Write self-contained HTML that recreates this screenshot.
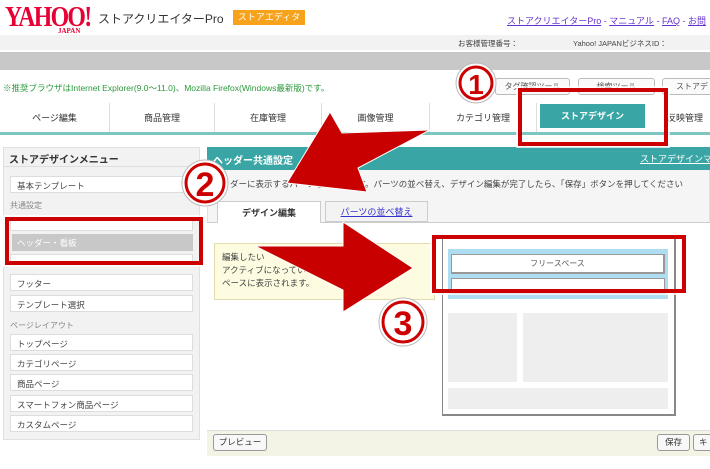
<!DOCTYPE html>
<html><head><meta charset="utf-8"><style>
*{margin:0;padding:0;box-sizing:border-box}
body{width:710px;height:469px;overflow:hidden;background:#fff;font-family:"Liberation Sans","Noto Sans CJK JP",sans-serif;font-size:9px;color:#333;position:relative}
.a{position:absolute}
.item{position:absolute;left:10px;width:183px;height:17px;background:#fff;border:1px solid #ddd;padding:3px 6px;font-size:8.5px;color:#444}
.lbl{position:absolute;left:10px;font-size:8px;color:#888}
.tab{position:absolute;top:103px;height:30px;border-right:1px solid #ddd;text-align:center;line-height:30px;font-size:9px}
.btn{position:absolute;top:78px;height:17px;border:1px solid #bbb;border-radius:3px;background:#fafafa;font-size:8px;text-align:center;line-height:15px;color:#555}
</style></head><body>
<div class="a" style="left:5px;top:2px;font:bold 28px 'Liberation Serif',serif;color:#e60033;letter-spacing:-2px;transform:scaleX(0.85);transform-origin:left">YAHOO!</div>
<div class="a" style="left:58px;top:27px;font:bold 7px 'Liberation Serif',serif;color:#e60033">JAPAN</div>
<div class="a" style="left:98px;top:10px;font-size:12px;color:#333;white-space:nowrap">ストアクリエイターPro</div>
<div class="a" style="left:233px;top:10px;width:72px;height:15px;background:#f7a21b;color:#fff;font-size:9px;text-align:center;line-height:15px">ストアエディタ</div>
<div class="a" style="left:507px;top:14px;font-size:9px;color:#63c;white-space:nowrap"><u>ストアクリエイターPro</u> - <u>マニュアル</u> - <u>FAQ</u> - <u>お問</u></div>
<div class="a" style="left:0;top:35px;width:710px;height:15px;background:#f2f2f2"></div>
<div class="a" style="left:458px;top:38px;font-size:7.5px;color:#444">お客様管理番号：</div>
<div class="a" style="left:573px;top:38px;font-size:7.5px;color:#444">Yahoo! JAPANビジネスID：</div>
<div class="a" style="left:0;top:52px;width:710px;height:18px;background:#c8c8c8"></div>
<div class="a" style="left:3px;top:82px;font-size:8.5px;color:#2a9a3a">※推奨ブラウザはInternet Explorer(9.0〜11.0)、Mozilla Firefox(Windows最新版)です。</div>
<div class="btn" style="left:495px;width:75px">タグ確認ツール</div>
<div class="btn" style="left:578px;width:77px">検索ツール</div>
<div class="btn" style="left:662px;width:60px">ストアデ</div>
<div class="tab" style="left:0;width:110px">ページ編集</div>
<div class="tab" style="left:110px;width:105px">商品管理</div>
<div class="tab" style="left:215px;width:107px">在庫管理</div>
<div class="tab" style="left:322px;width:108px">画像管理</div>
<div class="tab" style="left:430px;width:107px">カテゴリ管理</div>
<div class="a" style="left:540px;top:104px;width:105px;height:24px;background:#3aa5a5;color:#fff;font-weight:bold;text-align:center;line-height:24px">ストアデザイン</div>
<div class="tab" style="left:645px;width:80px;border:0">反映管理</div>
<div class="a" style="left:0;top:132px;width:710px;height:3px;background:#7fc6c2"></div>
<!-- left -->
<div class="a" style="left:3px;top:147px;width:197px;height:293px;background:#f2f2f2;border:1px solid #e0e0e0"></div>
<div class="a" style="left:3px;top:147px;width:197px;height:20px;border-bottom:1px solid #ddd;font-weight:bold;font-size:10px;padding:4px 6px">ストアデザインメニュー</div>
<div class="item" style="top:176px">基本テンプレート</div>
<div class="lbl" style="top:200px">共通設定</div>
<div class="item" style="top:219px;height:12px"></div>
<div class="a" style="left:12px;top:234px;width:181px;height:17px;background:#c8c8c8;color:#fff;padding:3px 5px;font-size:8.5px">ヘッダー・看板</div>
<div class="item" style="top:254px;height:10px"></div>
<div class="item" style="top:274px">フッター</div>
<div class="item" style="top:295px">テンプレート選択</div>
<div class="lbl" style="top:320px">ページレイアウト</div>
<div class="item" style="top:334px">トップページ</div>
<div class="item" style="top:354px">カテゴリページ</div>
<div class="item" style="top:374px">商品ページ</div>
<div class="item" style="top:395px">スマートフォン商品ページ</div>
<div class="item" style="top:415px">カスタムページ</div>
<!-- right -->
<div class="a" style="left:207px;top:147px;width:503px;height:309px;background:#f5f5f5;border:1px solid #e0e0e0"></div>
<div class="a" style="left:207px;top:147px;width:503px;height:23px;background:#3aa5a5;color:#fff;font-weight:bold;font-size:10px;padding:5px 6px">ヘッダー共通設定</div>
<div class="a" style="left:640px;top:152px;color:#fff;font-size:9px;text-decoration:underline;white-space:nowrap">ストアデザインマ</div>
<div class="a" style="left:213px;top:178px;font-size:8.5px;color:#444;white-space:nowrap">ヘッダーに表示するパーツを設定します。パーツの並べ替え、デザイン編集が完了したら、「保存」ボタンを押してください</div>
<div class="a" style="left:207px;top:222px;width:503px;height:208px;background:#fff;border-top:1px solid #ccc"></div>
<div class="a" style="left:217px;top:201px;width:104px;height:22px;background:#fff;border:1px solid #ccc;border-bottom:0;text-align:center;line-height:22px;font-weight:bold">デザイン編集</div>
<div class="a" style="left:325px;top:201px;width:103px;height:21px;background:#f3f3f3;border:1px solid #ccc;text-align:center;line-height:21px;color:#33c;text-decoration:underline">パーツの並べ替え</div>
<div class="a" style="left:214px;top:243px;width:221px;height:57px;background:#fefce0;border:1px solid #e0dcb0;padding:7px 7px;font-size:8.5px;line-height:13px;color:#444">編集したい<br>アクティブになっているパーツはのス<br>ペースに表示されます。</div>
<div class="a" style="left:442px;top:236px;width:234px;height:180px;background:#fff;border:1px solid #888;border-width:1px 2px 2px 1px"></div>
<div class="a" style="left:448px;top:249px;width:220px;height:50px;background:#aedcf0"></div>
<div class="a" style="left:451px;top:254px;width:214px;height:20px;background:#fff;border:1px solid #999;border-width:1px 2px 2px 1px;text-align:center;line-height:18px;font-size:8px;color:#555">フリースペース</div>
<div class="a" style="left:451px;top:278px;width:214px;height:16px;background:#fff;border:1px solid #999"></div>
<div class="a" style="left:448px;top:313px;width:69px;height:69px;background:#eee"></div>
<div class="a" style="left:523px;top:313px;width:145px;height:69px;background:#eee"></div>
<div class="a" style="left:448px;top:388px;width:220px;height:21px;background:#eee"></div>
<div class="a" style="left:207px;top:430px;width:503px;height:26px;background:#f3f3e6;border-top:1px solid #ddd"></div>
<div class="a" style="left:213px;top:434px;width:54px;height:17px;background:#f8f8f8;border:1px solid #999;border-radius:3px;text-align:center;line-height:15px;font-size:8.5px">プレビュー</div>
<div class="a" style="left:657px;top:434px;width:33px;height:17px;background:#f8f8f8;border:1px solid #999;border-radius:3px;text-align:center;line-height:15px;font-size:8.5px">保存</div>
<div class="a" style="left:693px;top:434px;width:30px;height:17px;background:#f8f8f8;border:1px solid #999;border-radius:3px;padding-left:5px;line-height:15px;font-size:8.5px">キ</div>
<!-- annotations -->
<svg class="a" style="left:0;top:0" width="710" height="469">
<g fill="none" stroke="#fff" stroke-width="1.5">
<rect x="517" y="87" width="152" height="60"/><rect x="4" y="216" width="200" height="50"/><rect x="431" y="234" width="256" height="60"/></g>
<g fill="none" stroke="#c00" stroke-width="4">
<rect x="520" y="90" width="146" height="54"/><rect x="7" y="219" width="194" height="44"/><rect x="434" y="237" width="250" height="54"/></g>
<polygon points="287,183 330,112 342,133 430,130 358,168 367,192" fill="#c80000" stroke="#fff" stroke-width="1"/>
<polygon points="255,246 343,246 343,222 413,268 343,312 343,290" fill="#c80000" stroke="#fff" stroke-width="1"/>
<g stroke="#bbb" stroke-width="1" fill="#fff"><circle cx="476" cy="83" r="20"/><circle cx="205" cy="183" r="23"/><circle cx="403" cy="322" r="24"/></g>
<g stroke="#c00" stroke-width="3" fill="none"><circle cx="476" cy="83" r="16"/><circle cx="205" cy="183" r="19"/><circle cx="403" cy="322" r="20"/></g>
<g fill="#c00" font-family="Liberation Sans,sans-serif" font-weight="bold" text-anchor="middle">
<text x="476" y="94" font-size="28">1</text><text x="205" y="196" font-size="34">2</text><text x="403" y="335" font-size="34">3</text></g>
</svg>
</body></html>
